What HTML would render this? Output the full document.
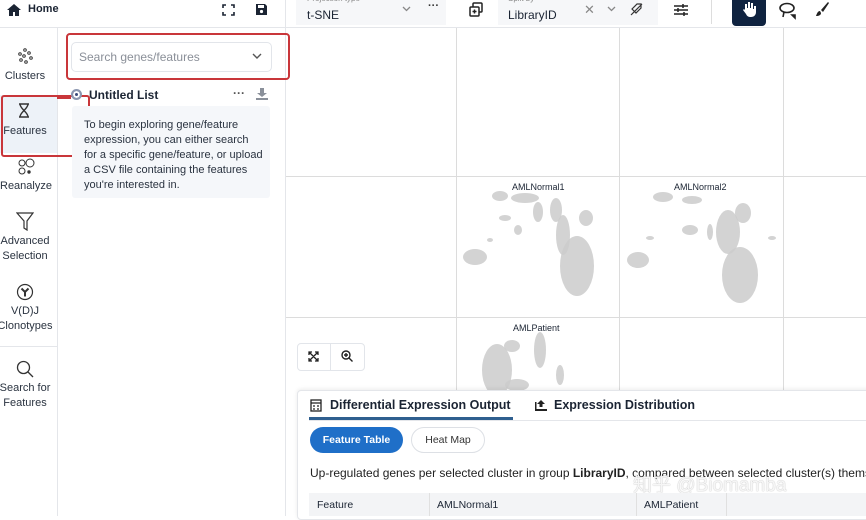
<!DOCTYPE html>
<html><head><meta charset="utf-8"><style>
*{box-sizing:border-box;margin:0;padding:0}
body{width:866px;height:516px;overflow:hidden;background:#fff;font-family:"Liberation Sans",sans-serif;color:#1b2433;position:relative}
.a{position:absolute}
.nav{font-size:11px;color:#2a3340;text-align:center;width:50px;line-height:15px}
</style></head><body>
<!-- left nav -->
<div class="a" style="left:0;top:0;width:286px;height:28px;border-bottom:1px solid #e4e6ea"></div>
<svg class="a" style="left:6px;top:3px" width="16" height="14" viewBox="0 0 16 14"><path d="M8 1L1 7h2v6h4V9h2v4h4V7h2z" fill="#1b2433"/></svg>
<div class="a" style="left:28px;top:3px;font-size:11px;font-weight:bold">Home</div>
<svg class="a" style="left:222px;top:4px" width="13" height="12" viewBox="0 0 13 12" fill="none" stroke="#1b2433" stroke-width="1.6"><path d="M1 4V1h3M9 1h3v3M12 8v3H9M4 11H1V8"/></svg>
<svg class="a" style="left:255px;top:3px" width="13" height="13" viewBox="0 0 13 13"><path d="M1 1h9l2 2v9H1z" fill="#1b2433"/><rect x="3" y="2" width="6" height="3" fill="#fff"/><circle cx="6.5" cy="8.5" r="1.6" fill="#fff"/></svg>
<div class="a" style="left:57px;top:28px;width:1px;height:488px;background:#e4e6ea"></div>
<div class="a" style="left:285px;top:0;width:1px;height:516px;background:#e4e6ea"></div>
<div class="a" style="left:0;top:95px;width:57px;height:58px;background:#edf2f8"></div>
<svg class="a" style="left:15px;top:47px" width="20" height="18" viewBox="0 0 20 18" fill="none" stroke="#333" stroke-width="1"><circle cx="10" cy="3" r="1.3"/><circle cx="5" cy="7" r="1.3"/><circle cx="14" cy="6" r="1.3"/><circle cx="9" cy="9" r="1.3"/><circle cx="16" cy="11" r="1.3"/><circle cx="6" cy="13" r="1.3"/><circle cx="11" cy="15" r="1.3"/></svg>
<div class="a nav" style="left:0;top:69px">Clusters</div>
<svg class="a" style="left:18px;top:103px" width="12" height="15" viewBox="0 0 12 15" fill="none" stroke="#333" stroke-width="1.4"><path d="M1 1h10M1 14h10M2 1c0 5 8 8 8 13M10 1c0 5-8 8-8 13"/></svg>
<div class="a nav" style="left:0;top:124px">Features</div>
<svg class="a" style="left:16px;top:157px" width="20" height="20" viewBox="0 0 20 20" fill="none" stroke="#333" stroke-width="1"><circle cx="6" cy="6" r="3"/><circle cx="14" cy="6" r="4"/><circle cx="6" cy="14" r="3"/><circle cx="13" cy="15" r="1.2" fill="#333"/></svg>
<div class="a nav" style="left:0;top:179px">Reanalyze</div>
<svg class="a" style="left:16px;top:212px" width="18" height="19" viewBox="0 0 18 19" fill="none" stroke="#333" stroke-width="1.2"><path d="M1 1h16l-6 8v9l-3-2V9z"/></svg>
<div class="a nav" style="left:0;top:234px">Advanced<br>Selection</div>
<svg class="a" style="left:16px;top:283px" width="18" height="18" viewBox="0 0 18 18" fill="none" stroke="#333" stroke-width="1.2"><circle cx="9" cy="9" r="7.5"/><path d="M5.5 5.5L9 9l3.5-3.5M9 9v4.5" stroke-width="2"/></svg>
<div class="a nav" style="left:-3px;top:304px;width:56px">V(D)J<br>Clonotypes</div>
<div class="a" style="left:0;top:346px;width:57px;height:1px;background:#e4e6ea"></div>
<svg class="a" style="left:16px;top:360px" width="18" height="18" viewBox="0 0 18 18" fill="none" stroke="#333" stroke-width="1.3"><circle cx="7.5" cy="7.5" r="6"/><path d="M12 12l5 5"/></svg>
<div class="a nav" style="left:-1px;top:381px;width:52px">Search for<br>Features</div>
<div class="a" style="left:1px;top:95px;width:89px;height:62px;border:2px solid #c9363a;border-radius:3px"></div>
<div class="a" style="left:57px;top:95px;width:14px;height:4px;background:#c9363a"></div>
<!-- panel -->
<div class="a" style="left:71px;top:42px;width:201px;height:30px;border:1px solid #e2e5ea;border-radius:5px"></div>
<div class="a" style="left:79px;top:50px;font-size:12px;color:#8a8f98">Search genes/features</div>
<svg class="a" style="left:252px;top:53px" width="10" height="7" viewBox="0 0 10 7" fill="none" stroke="#555" stroke-width="1.4"><path d="M1 1l4 4 4-4"/></svg>
<div class="a" style="left:66px;top:33px;width:224px;height:47px;border:2px solid #c9363a;border-radius:4px"></div>
<div class="a" style="left:71px;top:89px;width:11px;height:11px;border-radius:50%;border:2px solid #8c97b0;background:#3a4a7a;box-shadow:inset 0 0 0 2px #fff"></div>
<div class="a" style="left:89px;top:88px;font-size:12px;font-weight:bold">Untitled List</div>
<div class="a" style="left:233px;top:86px;font-size:12px;color:#555;font-weight:bold">···</div>
<svg class="a" style="left:256px;top:88px" width="12" height="12" viewBox="0 0 12 12" fill="#8a909a"><path d="M4 0h4v5h3L6 9 1 5h3z"/><rect x="0" y="10" width="12" height="2"/></svg>
<div class="a" style="left:72px;top:106px;width:198px;height:92px;background:#f5f7fa;border-radius:3px"></div>
<div class="a" style="left:84px;top:118px;width:180px;font-size:11px;line-height:15px;color:#2a3340">To begin exploring gene/feature expression, you can either search for a specific gene/feature, or upload a CSV file containing the features you're interested in.</div>
<!-- toolbar -->
<div class="a" style="left:286px;top:0;width:580px;height:28px;border-bottom:1px solid #e4e6ea"></div>
<div class="a" style="left:296px;top:0;width:150px;height:25px;background:#f6f7f9"></div>
<div class="a" style="left:307px;top:-6px;font-size:8px;color:#888">Projection type</div>
<div class="a" style="left:307px;top:8px;font-size:12px">t-SNE</div>
<svg class="a" style="left:402px;top:6px" width="9" height="6" viewBox="0 0 9 6" fill="none" stroke="#888" stroke-width="1.3"><path d="M1 1l3.5 3.5L8 1"/></svg>
<div class="a" style="left:428px;top:0;font-size:11px;font-weight:bold;color:#333">···</div>
<svg class="a" style="left:469px;top:2px" width="14" height="15" viewBox="0 0 14 15" fill="none" stroke="#222" stroke-width="1.5"><rect x="4" y="1" width="9" height="9" rx="1"/><rect x="1" y="5" width="9" height="9" rx="1" fill="#fff"/><path d="M5.5 7.5v4M3.5 9.5h4"/></svg>
<div class="a" style="left:498px;top:0;width:160px;height:25px;background:#f6f7f9"></div>
<div class="a" style="left:508px;top:-6px;font-size:8px;color:#888">Split by</div>
<div class="a" style="left:508px;top:8px;font-size:12px">LibraryID</div>
<div class="a" style="left:584px;top:2px;font-size:13px;color:#888">✕</div>
<svg class="a" style="left:607px;top:6px" width="9" height="6" viewBox="0 0 9 6" fill="none" stroke="#888" stroke-width="1.3"><path d="M1 1l3.5 3.5L8 1"/></svg>
<svg class="a" style="left:630px;top:3px" width="13" height="13" viewBox="0 0 13 13" fill="none" stroke="#333" stroke-width="1.2"><path d="M2 6l5-5h4v4l-5 5zM1 12L12 1"/></svg>
<svg class="a" style="left:674px;top:4px" width="14" height="12" viewBox="0 0 14 12" stroke="#222" stroke-width="1.5"><path d="M0 2h14M0 6h14M0 10h14"/><path d="M9 0v4M4 4v4M10 8v4"/></svg>
<div class="a" style="left:711px;top:0;width:1px;height:24px;background:#ddd"></div>
<div class="a" style="left:732px;top:-4px;width:34px;height:30px;background:#0f2340;border-radius:4px"></div>
<svg class="a" style="left:742px;top:1px" width="14" height="16" viewBox="0 0 14 16" fill="#fff"><path d="M3 8V3h2v4h1V1h2v6h1V2h2v6h1V5h2v6c0 3-2 5-5 5s-4-1-5-3L1 9l1-1 1 1z"/></svg>
<svg class="a" style="left:778px;top:2px" width="18" height="18" viewBox="0 0 18 18" fill="none" stroke="#222" stroke-width="1.6"><ellipse cx="9" cy="6" rx="7" ry="4.5"/><path d="M6 10l-1 5"/><path d="M14 13l3 0-0 3z" fill="#222"/></svg>
<svg class="a" style="left:814px;top:1px" width="16" height="16" viewBox="0 0 16 16"><path d="M14 1L7 9l2 2 6-9z" fill="#222"/><path d="M6 10c-2 0-3 2-4 5 3 0 5-1 5-3z" fill="#222"/></svg>
<!-- plot grid -->
<div class="a" style="left:456px;top:28px;width:1px;height:362px;background:#dcdcdc"></div>
<div class="a" style="left:619px;top:28px;width:1px;height:362px;background:#dcdcdc"></div>
<div class="a" style="left:783px;top:28px;width:1px;height:362px;background:#dcdcdc"></div>
<div class="a" style="left:286px;top:176px;width:580px;height:1px;background:#dcdcdc"></div>
<div class="a" style="left:286px;top:317px;width:580px;height:1px;background:#dcdcdc"></div>
<div class="a" style="left:512px;top:182px;font-size:9px">AMLNormal1</div>
<div class="a" style="left:674px;top:182px;font-size:9px">AMLNormal2</div>
<div class="a" style="left:513px;top:323px;font-size:9px">AMLPatient</div>
<svg class="a" style="left:0;top:0" width="866" height="390" viewBox="0 0 866 390" fill="#cbcbcb" fill-opacity="0.85">
<ellipse cx="577" cy="266" rx="17" ry="30"/><ellipse cx="563" cy="235" rx="7" ry="20"/><ellipse cx="556" cy="210" rx="6" ry="12"/>
<ellipse cx="475" cy="257" rx="12" ry="8"/><ellipse cx="500" cy="196" rx="8" ry="5"/><ellipse cx="525" cy="198" rx="14" ry="5"/><ellipse cx="538" cy="212" rx="5" ry="10"/><ellipse cx="586" cy="218" rx="7" ry="8"/><ellipse cx="518" cy="230" rx="4" ry="5"/><ellipse cx="505" cy="218" rx="6" ry="3"/><ellipse cx="490" cy="240" rx="3" ry="2"/>
<ellipse cx="740" cy="275" rx="18" ry="28"/><ellipse cx="728" cy="232" rx="12" ry="22"/><ellipse cx="638" cy="260" rx="11" ry="8"/><ellipse cx="663" cy="197" rx="10" ry="5"/><ellipse cx="692" cy="200" rx="10" ry="4"/><ellipse cx="743" cy="213" rx="8" ry="10"/><ellipse cx="690" cy="230" rx="8" ry="5"/><ellipse cx="710" cy="232" rx="3" ry="8"/><ellipse cx="772" cy="238" rx="4" ry="2"/><ellipse cx="650" cy="238" rx="4" ry="2"/>
<ellipse cx="497" cy="370" rx="15" ry="26"/><ellipse cx="512" cy="346" rx="8" ry="6"/><ellipse cx="540" cy="350" rx="6" ry="18"/><ellipse cx="517" cy="385" rx="12" ry="6"/><ellipse cx="560" cy="375" rx="4" ry="10"/>
</svg>
<div class="a" style="left:297px;top:343px;width:68px;height:28px;border:1px solid #e2e5ea;border-radius:4px;background:#fff"></div>
<div class="a" style="left:330px;top:343px;width:1px;height:28px;background:#e2e5ea"></div>
<svg class="a" style="left:308px;top:351px" width="11" height="11" viewBox="0 0 11 11" fill="none" stroke="#222" stroke-width="1.3"><path d="M1 1l9 9M10 1l-9 9M1 4V1h3M7 1h3v3M10 7v3H7M4 10H1V7"/></svg>
<svg class="a" style="left:341px;top:350px" width="12" height="12" viewBox="0 0 12 12" fill="none" stroke="#222" stroke-width="1.4"><circle cx="5" cy="5" r="4"/><path d="M8 8l3.5 3.5M5 3v4M3 5h4"/></svg>
<!-- bottom panel -->
<div class="a" style="left:297px;top:390px;width:580px;height:130px;background:#fff;border:1px solid #e4e6ea;border-radius:4px;box-shadow:0 -1px 4px rgba(0,0,0,.08)"></div>
<svg class="a" style="left:310px;top:399px" width="12" height="13" viewBox="0 0 12 13" fill="none" stroke="#222" stroke-width="1.3"><rect x="1" y="1" width="10" height="11"/><path d="M1 4h10M3 7h2M7 7h2M3 10h2M7 10h2"/></svg>
<div class="a" style="left:330px;top:398px;font-size:12.5px;font-weight:bold;color:#1b2433">Differential Expression Output</div>
<div class="a" style="left:309px;top:417px;width:204px;height:3px;background:#2f5f8f"></div>
<div class="a" style="left:309px;top:420px;width:560px;height:1px;background:#e4e6ea"></div>
<svg class="a" style="left:535px;top:399px" width="12" height="12" viewBox="0 0 12 12" fill="#222"><path d="M6 1L2 5h2.5v3h3V5H10z"/><path d="M0 3v9h12V10H1.5V3z"/></svg>
<div class="a" style="left:554px;top:398px;font-size:12.5px;font-weight:bold;color:#1b2433">Expression Distribution</div>
<div class="a" style="left:310px;top:427px;width:93px;height:26px;border-radius:13px;background:#1f6fc8;color:#fff;font-size:10.5px;font-weight:bold;text-align:center;line-height:26px">Feature Table</div>
<div class="a" style="left:411px;top:427px;width:74px;height:26px;border-radius:13px;border:1px solid #dde0e5;color:#333;font-size:10.5px;text-align:center;line-height:24px">Heat Map</div>
<div class="a" style="left:310px;top:466px;font-size:12px;color:#222;white-space:nowrap">Up-regulated genes per selected cluster in group <b>LibraryID</b>, compared between selected cluster(s) themselves</div>
<div class="a" style="left:633px;top:470px;font-size:19px;color:rgba(255,255,255,.9);text-shadow:0 0 1px #999;font-family:'Liberation Sans','Noto Sans CJK SC',sans-serif">知乎 @Biomamba</div>
<div class="a" style="left:309px;top:493px;width:560px;height:23px;background:#f3f4f6"></div>
<div class="a" style="left:429px;top:493px;width:1px;height:23px;background:#e0e0e0"></div>
<div class="a" style="left:636px;top:493px;width:1px;height:23px;background:#e0e0e0"></div>
<div class="a" style="left:726px;top:493px;width:1px;height:23px;background:#e0e0e0"></div>
<div class="a" style="left:317px;top:499px;font-size:10.5px">Feature</div>
<div class="a" style="left:437px;top:499px;font-size:10.5px">AMLNormal1</div>
<div class="a" style="left:644px;top:499px;font-size:10.5px">AMLPatient</div>
</body></html>
